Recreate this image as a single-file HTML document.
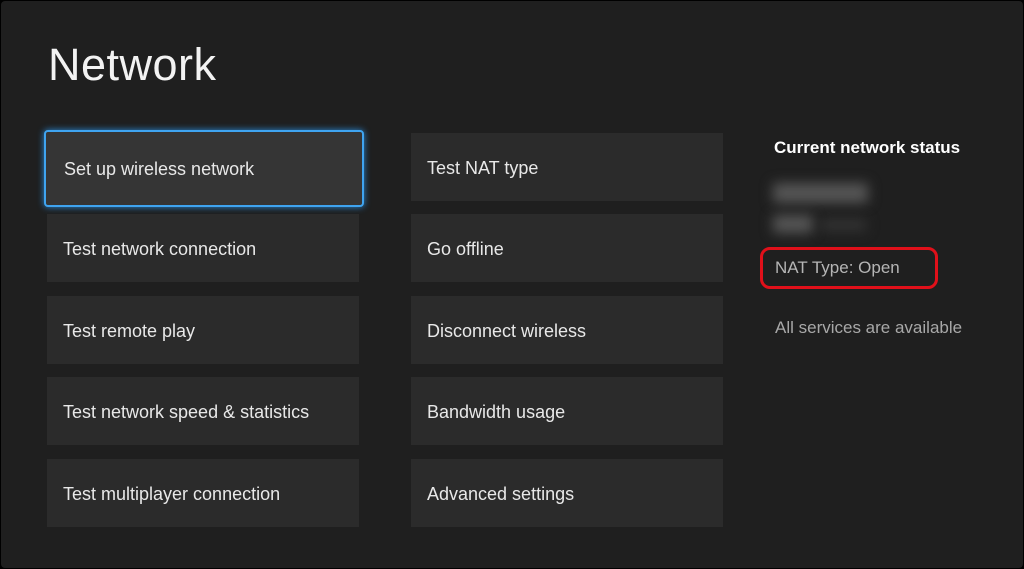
<!DOCTYPE html>
<html><head><style>
body{margin:0;width:1024px;height:569px;background:#000;overflow:hidden;font-family:"Liberation Sans",sans-serif;}
.f{position:absolute;left:1px;top:1px;width:1022px;height:567px;background:#1f1f1f;border-radius:4px;}
h1{position:absolute;left:47px;top:38px;margin:0;font-weight:normal;font-size:45px;color:#f2f2f2;letter-spacing:0.5px}
.t{position:absolute;width:312px;height:68px;background:#2b2b2b;color:#e8e8e8;font-size:18px;line-height:70px;box-sizing:border-box;padding-left:16px;}
.sel{left:43px!important;top:129px!important;width:320px;height:77px;line-height:75px;background:#353535;border:2px solid #3fa4f0;border-radius:4px;box-shadow:0 0 7px #2a8ad8;padding-left:18px;}
.s{position:absolute;color:#fff;font-size:16px}
.blur{position:absolute;background:#555;filter:blur(6px)}
</style></head><body><div class="f">
<h1>Network</h1>
<div class="t sel">Set up wireless network</div>
<div class="t" style="left:46px;top:213px">Test network connection</div>
<div class="t" style="left:46px;top:295px">Test remote play</div>
<div class="t" style="left:46px;top:376px">Test network speed &amp; statistics</div>
<div class="t" style="left:46px;top:458px">Test multiplayer connection</div>
<div class="t" style="left:410px;top:132px">Test NAT type</div>
<div class="t" style="left:410px;top:213px">Go offline</div>
<div class="t" style="left:410px;top:295px">Disconnect wireless</div>
<div class="t" style="left:410px;top:376px">Bandwidth usage</div>
<div class="t" style="left:410px;top:458px">Advanced settings</div>
<div class="s" style="left:773px;top:137px;font-weight:bold;font-size:17px">Current network status</div>
<div class="blur" style="left:772px;top:182px;width:95px;height:20px"></div>
<div class="blur" style="left:772px;top:214px;width:40px;height:18px"></div>
<div class="blur" style="left:820px;top:218px;width:45px;height:12px;background:#333"></div>
<div style="position:absolute;left:759px;top:246px;width:172px;height:36px;border:3px solid #e0101a;border-radius:10px"></div>
<div class="s" style="left:774px;top:257px;color:#b5b5b5;font-size:17px">NAT Type: Open</div>
<div class="s" style="left:774px;top:317px;color:#a8a8a8;font-size:17px">All services are available</div>
</div></body></html>
